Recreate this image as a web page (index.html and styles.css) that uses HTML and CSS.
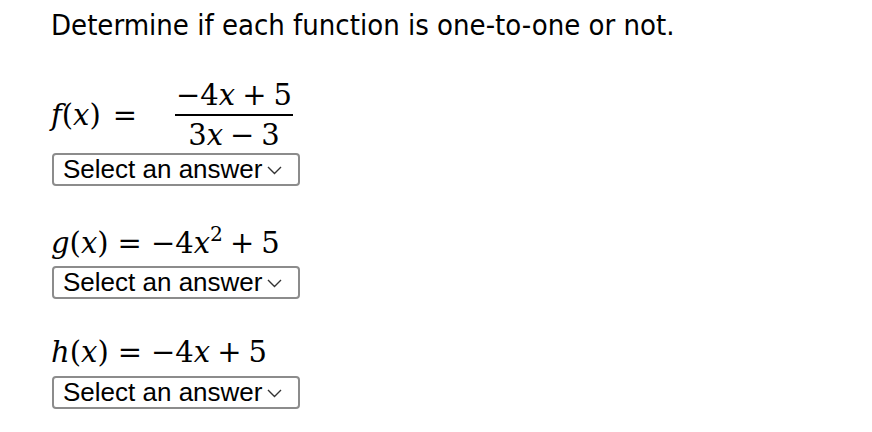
FILE: index.html
```html
<!DOCTYPE html>
<html>
<head>
<meta charset="utf-8">
<link rel="stylesheet" href="styles.css">
</head>
<body>
<div class="page">
  <p class="prompt">Determine if each function is one-to-one or not.</p>

  <div class="item item-f">
    <div class="math row">
      <span class="lhs"><i>f</i>(<i>x</i>)<span class="rel rel-f">=</span></span>
      <span class="frac">
        <span class="num">−4<i>x</i><span class="bin">+</span>5</span>
        <span class="bar"></span>
        <span class="den">3<i>x</i><span class="bin">−</span>3</span>
      </span>
    </div>
    <div class="select select-f"><span class="label">Select an answer</span><svg class="chev" width="15" height="9" viewBox="0 0 15 9"><path d="M1 1 L7.5 7.5 L14 1" fill="none" stroke="#333" stroke-width="1.4"/></svg></div>
  </div>

  <div class="item item-g">
    <div class="math line"><i>g</i>(<i>x</i>)<span class="rel">=</span>−4<i>x</i><sup>2</sup><span class="bin">+</span>5</div>
    <div class="select select-g"><span class="label">Select an answer</span><svg class="chev" width="15" height="9" viewBox="0 0 15 9"><path d="M1 1 L7.5 7.5 L14 1" fill="none" stroke="#333" stroke-width="1.4"/></svg></div>
  </div>

  <div class="item item-h">
    <div class="math line"><i>h</i>(<i>x</i>)<span class="rel">=</span>−4<i>x</i><span class="bin">+</span>5</div>
    <div class="select select-h"><span class="label">Select an answer</span><svg class="chev" width="15" height="9" viewBox="0 0 15 9"><path d="M1 1 L7.5 7.5 L14 1" fill="none" stroke="#333" stroke-width="1.4"/></svg></div>
  </div>
</div>
</body>
</html>
```

FILE: styles.css
```css
html, body {
  margin: 0;
  padding: 0;
  background: #ffffff;
}

.page {
  padding: 8px 0 0 51px;
  color: #000;
}

.prompt {
  margin: 0;
  font-family: "DejaVu Sans Condensed", "DejaVu Sans", sans-serif;
  font-size: 29px;
  line-height: 34px;
}

.item {
  display: flex;
  flex-direction: column;
  align-items: flex-start;
}

.item-f { margin-top: 35px; }
.item-g { margin-top: 39px; }
.item-h { margin-top: 35px; }

.math {
  font-family: "DejaVu Serif", "Liberation Serif", serif;
  font-size: 29px;
  line-height: 36px;
  white-space: nowrap;
}

.math i {
  font-style: italic;
}

.row {
  display: flex;
  align-items: center;
}

.rel {
  padding: 0 9px;
}

.rel-f {
  padding: 0 12px;
}

.bin {
  padding: 0 7px;
}

.frac {
  display: inline-flex;
  flex-direction: column;
  align-items: center;
  padding-left: 26px;
}

.num, .den {
  line-height: 36px;
  padding: 0 1px;
}

.num {
  padding-bottom: 1px;
}

.den {
  padding-top: 1px;
}

.bar {
  align-self: stretch;
  height: 2px;
  background: #000;
}

.line sup {
  font-size: 0.7em;
  line-height: 0;
  vertical-align: 0.6em;
}

.select {
  display: flex;
  align-items: center;
  gap: 5px;
  box-sizing: border-box;
  width: 248px;
  height: 33px;
  margin-left: 1px;
  padding: 0 8px 0 9px;
  border: 2px solid #8c8c8c;
  border-radius: 4px;
  font-family: "Liberation Sans", Arial, sans-serif;
  font-size: 26px;
  color: #000;
  white-space: nowrap;
}

.select-f { margin-top: 0; }
.select-g { margin-top: 5px; }
.select-h { margin-top: 6px; }

.chev {
  flex: none;
  margin-top: 1px;
}
```
